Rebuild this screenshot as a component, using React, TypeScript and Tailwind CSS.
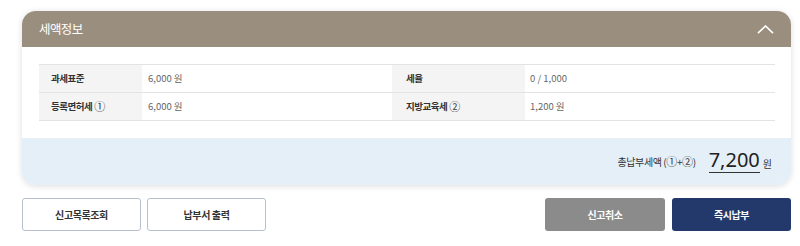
import React from "react";

const font = { fontFamily: '"Noto Sans CJK KR", "Noto Sans", sans-serif' };

function Chevron() {
  return (
    <svg width="17" height="9" viewBox="0 0 17 9" fill="none">
      <path d="M1 8.2L8.5 1l7.5 7.2" stroke="#fff" strokeWidth="1.6" />
    </svg>
  );
}

function Circ({ n }: { n: string }) {
  return <span className="font-normal text-[11px] ml-[2px] leading-none">{n}</span>;
}

export default function App() {
  return (
    <div className="w-[800px] h-[246px] bg-white pl-[22px] pr-[9px] pt-[11px]" style={font}>
      <div className="rounded-[14px] overflow-hidden bg-white shadow-[0_1px_6px_rgba(0,0,0,0.14)]">
        <div className="h-[36px] bg-[#9a8f7e] flex items-center justify-between pl-[17px] pr-[17px]">
          <span className="text-white text-[12.5px] tracking-[-0.6px]">세액정보</span>
          <Chevron />
        </div>
        <div className="px-[17px] pt-[17px] pb-[17px] pr-[16px]">
          <div className="grid grid-cols-[103px_250px_133px_1fr] border-t border-[#e3e3e3] text-[9.5px] text-[#333]">
            <div className="h-[28px] flex items-center pl-[12px] bg-[#f4f4f4] font-bold tracking-[-0.5px] border-b border-[#e3e3e3]">과세표준</div>
            <div className="h-[28px] flex items-center pl-[6px] text-[#666] border-b border-[#e3e3e3]">6,000 원</div>
            <div className="h-[28px] flex items-center pl-[14px] bg-[#f4f4f4] font-bold tracking-[-0.5px] border-b border-[#e3e3e3]">세율</div>
            <div className="h-[28px] flex items-center pl-[5px] text-[#666] border-b border-[#e3e3e3]">0 / 1,000</div>
            <div className="h-[28px] flex items-center pl-[12px] bg-[#f4f4f4] font-bold tracking-[-0.5px] border-b border-[#e3e3e3]">등록면허세<Circ n="①" /></div>
            <div className="h-[28px] flex items-center pl-[6px] text-[#666] border-b border-[#e3e3e3]">6,000 원</div>
            <div className="h-[28px] flex items-center pl-[14px] bg-[#f4f4f4] font-bold tracking-[-0.5px] border-b border-[#e3e3e3]">지방교육세<Circ n="②" /></div>
            <div className="h-[28px] flex items-center pl-[5px] text-[#666] border-b border-[#e3e3e3]">1,200 원</div>
          </div>
        </div>
        <div className="h-[47px] bg-[#e5eff8] flex items-center justify-end pr-[19px]">
          <span className="text-[10px] text-[#333] tracking-[-0.4px] mr-[13px] flex items-center">
            총납부세액 (<span className="text-[11px] leading-none">①</span>+<span className="text-[11px] leading-none">②</span>)
          </span>
          <span className="text-[20px] leading-none text-[#222] border-b border-[#333] pb-[2px]" style={{ fontFamily: '"Noto Sans", sans-serif' }}>7,200</span>
          <span className="text-[10px] text-[#333] ml-[3px] mt-[4px]">원</span>
        </div>
      </div>
      <div className="flex items-center justify-between mt-[13px]">
        <div className="flex gap-[6px]">
          <button className="w-[119px] h-[33px] rounded-[3px] border border-[#b8c0d0] bg-white text-[10px] font-bold text-[#333] tracking-[-0.4px]">신고목록조회</button>
          <button className="w-[119px] h-[33px] rounded-[3px] border border-[#b8c0d0] bg-white text-[10px] font-bold text-[#333] tracking-[-0.4px]">납부서 출력</button>
        </div>
        <div className="flex gap-[7px]">
          <button className="w-[120px] h-[33px] rounded-[3px] bg-[#8b8b8b] text-[10px] font-bold text-white tracking-[-0.4px]">신고취소</button>
          <button className="w-[119px] h-[33px] rounded-[3px] bg-[#24396b] text-[10px] font-bold text-white tracking-[-0.4px]">즉시납부</button>
        </div>
      </div>
    </div>
  );
}
